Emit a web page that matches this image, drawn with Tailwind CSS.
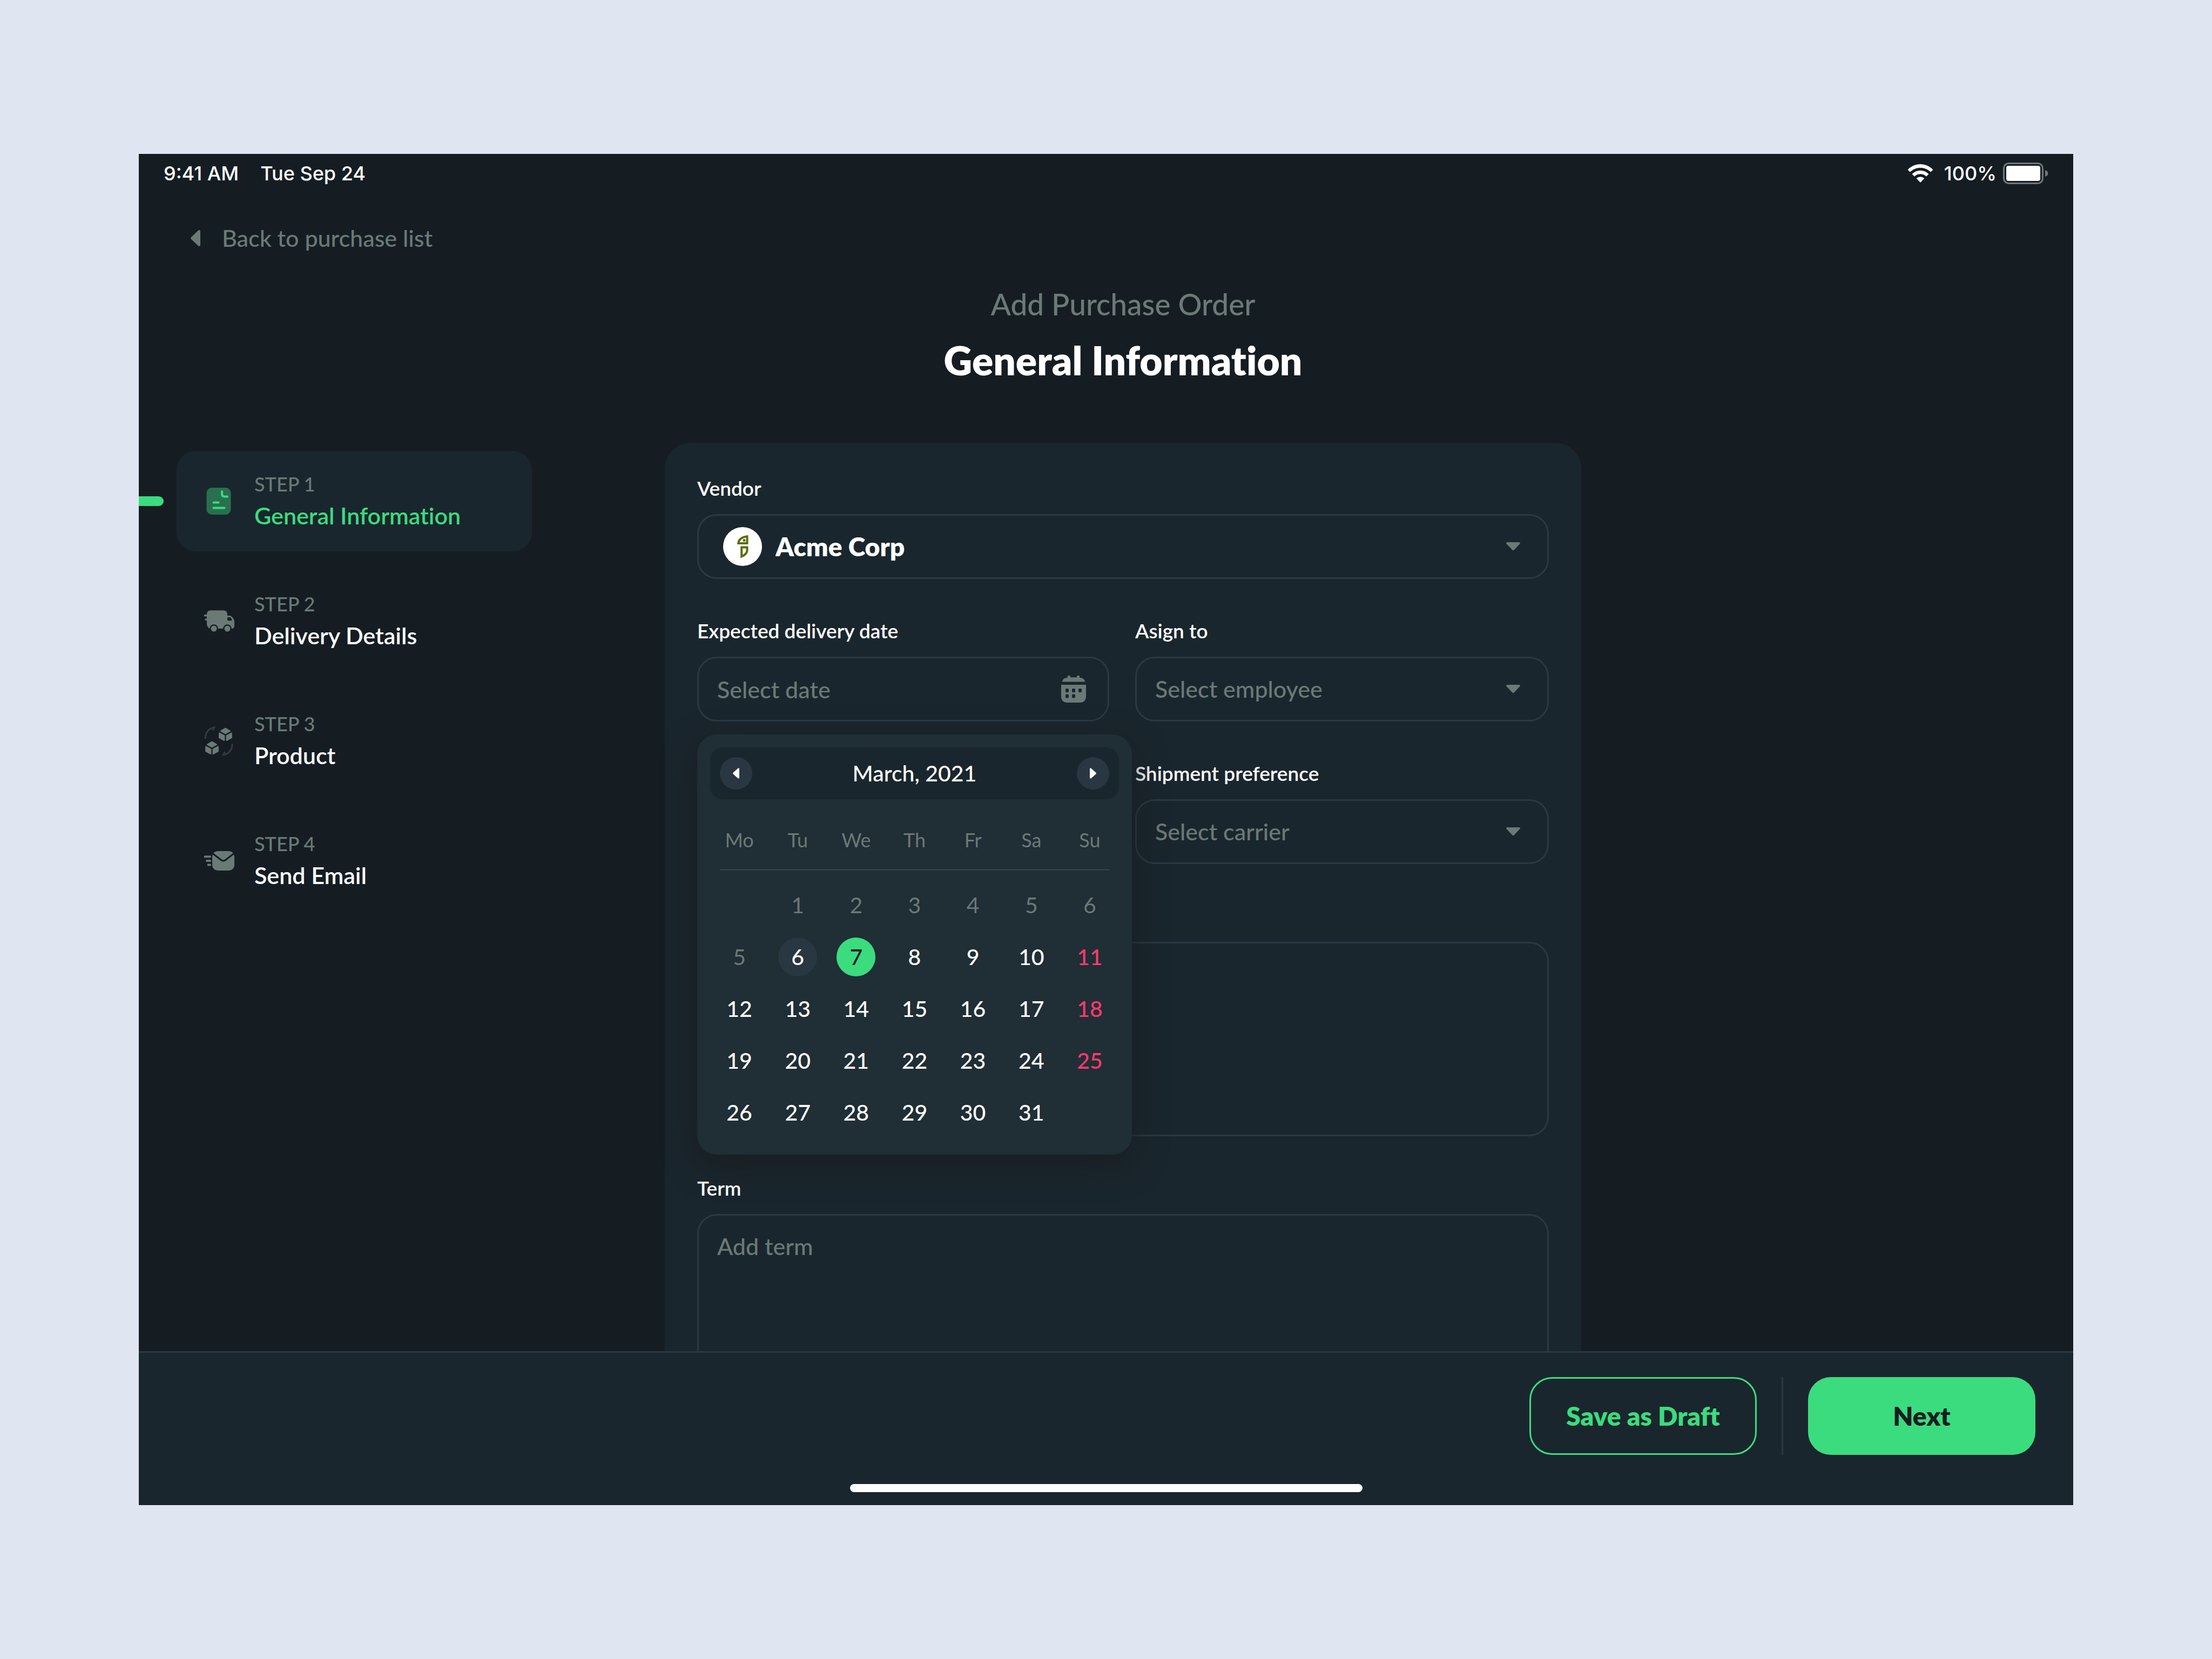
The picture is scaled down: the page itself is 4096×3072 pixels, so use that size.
<!DOCTYPE html>
<html lang="en">
<head>
  <meta charset="UTF-8" />
  <meta name="viewport" content="width=device-width, initial-scale=1" />
  <title>Add Purchase Order - General Information</title>
  <script src="https://cdn.jsdelivr.net/npm/@tailwindcss/browser@4"></script>
</head>
<body class="h-screen bg-[#dfe5f1] px-[257px] py-[285px] font-['Lato','Open_Sans',sans-serif] font-medium [font-variant-ligatures:no-common-ligatures] text-white">
  <div class="h-full bg-[#151d23] flex flex-col overflow-hidden">

    <!-- Status bar -->
    <div class="h-[72px] shrink-0 px-[46px] flex items-center justify-between font-['Inter',sans-serif] font-medium text-[36px]">
      <div class="flex gap-10">
        <span>9:41 AM</span>
        <span>Tue Sep 24</span>
      </div>
      <div class="flex items-center">
        <svg class="w-12 h-[34px] mr-5" viewBox="0 0 48 34" fill="currentColor">
          <path d="M.5 10.200C14-3.400 34-3.400 47.500 10.200L43.200 14.500C32.500 4 15.500 4 4.800 14.500Z" />
          <path d="M8.500 18.300C17.500 9.700 30.500 9.700 39.500 18.300L35 22.700C29 16.800 19 16.800 13 22.700Z" />
          <path d="M16.500 26.300C21 22.400 27 22.400 31.500 26.300L24 34Z" />
        </svg>
        <span class="mr-3">100%</span>
        <svg class="w-[84px] h-10" viewBox="0 0 84 40">
          <rect x="1.500" y="1.500" width="72" height="37" rx="9" fill="none" stroke="#727679" stroke-width="3" />
          <rect x="6" y="6" width="63" height="28" rx="4" fill="#fff" />
          <path d="M78 14c7 1 7 11 0 12z" fill="#727679" />
        </svg>
      </div>
    </div>

    <nav class="shrink-0 pt-[60px] pl-24">
      <a href="#" class="inline-flex items-center gap-10 text-[43px] leading-[48px] text-[#6b7977]">
        <svg class="w-[18px] h-[30px]" viewBox="0 0 18 30" fill="currentColor"><path d="M14 .8 1 13.200q-1.800 1.800 0 3.600L14 29.200q4 2.200 4-2V2.800q0-4.200-4-2z" /></svg>
        Back to purchase list
      </a>
    </nav>

    <main class="flex-1 min-h-0 overflow-hidden grid grid-cols-[974fr_1697fr_911fr] grid-rows-[auto_1fr] items-start pt-[62px]">
      <header class="col-start-2 text-center">
        <p class="text-[55px] leading-[72px] text-[#6b7977]">Add Purchase Order</p>
        <h1 class="mt-[26px] text-[73px] leading-[84px] font-extrabold">General Information</h1>
      </header>

      <!-- Steps -->
      <aside class="row-start-2 pt-[126px] pl-[70px] pr-[246px]">
        <ol class="flex flex-col gap-9">
          <li class="relative">
            <span class="absolute -left-[70px] top-[84px] w-[46px] h-[18px] rounded-r-full bg-[#3bdc7e]"></span>
            <a href="#" aria-current="step" class="h-[186px] px-12 flex items-center gap-9 rounded-[36px] bg-[#1a262d]">
              <svg class="w-[60px] h-[60px]" viewBox="0 0 60 60" fill="none" stroke="#3bdc7e" stroke-width="4" stroke-linecap="round">
                <rect x="7.500" y="5" width="45" height="50" rx="10" fill="#28704f" stroke="none" />
                <path d="M36 12v4.500q0 5 5 5h5M20.500 32.500h9M20.500 42.500h20" />
              </svg>
              <span class="flex flex-col pb-[2px]">
                <span class="text-[36px] leading-[48px] text-[#6b7977]">STEP 1</span>
                <span class="mt-2 text-[43px] leading-[54px] font-semibold text-[#3bdc7e]">General Information</span>
              </span>
            </a>
          </li>
          <li>
            <a href="#" class="h-[186px] px-12 flex items-center gap-9">
              <svg class="w-[60px] h-[60px]" viewBox="0 0 60 60" fill="#6b7977">
                <path d="M4.500 19.700H10M6 27.300H10" stroke="#6b7977" stroke-width="3.500" stroke-linecap="round" />
                <path d="M15 10.300H38.500Q46 10.300 46 18v2h5.500Q59 25 59 32v6.500q0 5-4 5.500H13Q8 41 8 35V17.500Q8 10.300 15 10.300Z" />
                <path d="M47.500 23h4q3 3 3.300 6.300h-7q-1.800 0-1.800-1.800v-3q0-1.500 1.500-1.500z" fill="#151d23" />
                <circle cx="21" cy="44" r="7.800" fill="#151d23" />
                <circle cx="46" cy="44" r="7.800" fill="#151d23" />
                <circle cx="21" cy="44" r="5.500" />
                <circle cx="46" cy="44" r="5.500" />
              </svg>
              <span class="flex flex-col pb-[2px]">
                <span class="text-[36px] leading-[48px] text-[#6b7977]">STEP 2</span>
                <span class="mt-2 text-[43px] leading-[54px] font-semibold">Delivery Details</span>
              </span>
            </a>
          </li>
          <li>
            <a href="#" class="h-[186px] px-12 flex items-center gap-9">
              <svg class="w-[60px] h-[60px]" viewBox="0 0 60 60" fill="#6b7977">
                <g stroke="#6b7977" stroke-linejoin="round" stroke-width="2">
                  <path d="M42.400 6.500 51 11.700 42.400 16.500 33.800 11.700ZM31 15.500 40.300 20.500V29L31 24ZM53.800 15.500 44.500 20.500V29L53.800 24Z" />
                  <path d="M17.500 31.500 26.100 36.700 17.500 41.500 8.900 36.700ZM6.100 40.500 15.400 45.500V54L6.100 49ZM28.900 40.500 19.600 45.500V54L28.900 49Z" />
                </g>
                <path d="M5.200 24.700Q6 8 22.500 4.500L19.500 9.500M55 36.700Q54 53 38 56L41 51" fill="none" stroke="#313b40" stroke-width="3" stroke-linecap="round" stroke-linejoin="round" />
              </svg>
              <span class="flex flex-col pb-[2px]">
                <span class="text-[36px] leading-[48px] text-[#6b7977]">STEP 3</span>
                <span class="mt-2 text-[43px] leading-[54px] font-semibold">Product</span>
              </span>
            </a>
          </li>
          <li>
            <a href="#" class="h-[186px] px-12 flex items-center gap-9">
              <svg class="w-[60px] h-[60px]" viewBox="0 0 60 60" fill="none">
                <rect x="18" y="12" width="41" height="36" rx="10" fill="#6b7977" />
                <path d="M17.500 15.500 34.500 28.500Q38.500 31.500 42.500 28.500L59.500 15.500" stroke="#151d23" stroke-width="3" />
                <path d="M4.500 22.300H14M8 30H14M10.500 37.500H14" stroke="#6b7977" stroke-width="4" stroke-linecap="round" />
              </svg>
              <span class="flex flex-col pb-[2px]">
                <span class="text-[36px] leading-[48px] text-[#6b7977]">STEP 4</span>
                <span class="mt-2 text-[43px] leading-[54px] font-semibold">Send Email</span>
              </span>
            </a>
          </li>
        </ol>
      </aside>

      <!-- Order form -->
      <form class="row-start-2 col-start-2 mt-[111px] px-[60px] pt-[60px] rounded-t-[48px] bg-[#1a262d] grid grid-cols-[254fr_255fr] gap-x-12 gap-y-[72px]">
        <div class="col-span-2 flex flex-col gap-6">
          <label for="vendor" class="text-[37px] leading-[48px] font-semibold">Vendor</label>
          <div class="relative">
            <select id="vendor" class="w-full h-[120px] pl-[142px] pr-24 appearance-none rounded-[36px] border-3 border-[#2a3944] text-[48px] font-extrabold">
              <option>Acme Corp</option>
            </select>
            <svg class="absolute left-12 top-6 w-[72px] h-[72px]" viewBox="0 0 72 72">
              <circle cx="36" cy="36" r="36" fill="#fff" />
              <g fill="none" stroke="#5d6b0c" stroke-width="4">
                <path d="M44.500 17.200V30H28.200Q29.500 19 44.500 17.200Z" />
                <path d="M34.200 37.500H44.500V43Q44 50.500 34.200 54.500Z" />
              </g>
              <circle cx="39" cy="24.500" r="2.500" fill="#5d6b0c" />
            </svg>
            <svg class="pointer-events-none absolute right-[53px] top-[52px] w-[26px] h-4" viewBox="0 0 26 16" fill="#6b7977"><path d="M2 0H24q3 .5 1.300 3L14.500 14.500q-1.500 1.500-3 0L.7 3Q-1 .5 2 0Z" /></svg>
          </div>
        </div>

        <div class="relative flex flex-col gap-6">
          <label for="delivery-date" class="text-[37px] leading-[48px] font-semibold">Expected delivery date</label>
          <div class="relative">
            <input id="delivery-date" type="text" placeholder="Select date" class="w-full h-[120px] pl-[34px] pr-24 rounded-[36px] border-3 border-[#2a3944] text-[43px] placeholder:text-[#6b7977]" />
            <svg class="pointer-events-none absolute right-[43px] top-[35px] w-[46px] h-[50px]" viewBox="0 0 46 50" fill="#6b7977">
              <path d="M12 3.500V2a2.500 2.500 0 0 1 5 0v1.200H29V2a2.500 2.500 0 0 1 5 0v1.500Q43 4.500 44.500 11.500H1.500Q3 4.500 12 3.500Z" />
              <path d="M0 17H46V38Q46 50 34 50H12Q0 50 0 38Z" />
              <g fill="#1a262d">
                <rect x="8" y="24" width="6" height="7" rx="2" /><rect x="20" y="24" width="6" height="7" rx="2" /><rect x="32" y="24" width="6" height="7" rx="2" />
                <rect x="8" y="34.500" width="6" height="7" rx="2" /><rect x="20" y="34.500" width="6" height="7" rx="2" />
              </g>
            </svg>
          </div>

          <!-- Date picker -->
          <div class="absolute left-0 top-full z-10 mt-6 w-[805px] px-6 pt-6 pb-[30px] rounded-[36px] bg-[#202e35] shadow-[0_18px_60px_rgba(24,28,30,0.8)]">
            <div class="h-24 px-[18px] flex items-center justify-between rounded-3xl bg-[#1a262d]">
              <button type="button" aria-label="Previous month" class="w-[60px] h-[60px] rounded-full bg-[#283742] flex items-center justify-center">
                <svg class="w-3 h-5" viewBox="0 0 12 20" fill="#fff"><path d="M9.500.8.800 8.500q-1.300 1.500 0 3L9.500 19.200Q12 20.500 12 18V2Q12-.5 9.500.8Z" /></svg>
              </button>
              <span class="text-[41px] font-medium">March, 2021</span>
              <button type="button" aria-label="Next month" class="w-[60px] h-[60px] rounded-full bg-[#283742] flex items-center justify-center">
                <svg class="w-3 h-5" viewBox="0 0 12 20" fill="#fff"><path d="M2.500.8 11.200 8.500q1.300 1.500 0 3L2.500 19.200Q0 20.500 0 18V2Q0-.5 2.500.8Z" /></svg>
              </button>
            </div>
            <table class="w-full table-fixed text-center text-[41px] font-medium">
              <thead class="text-[36px] text-[#6b7977]">
                <tr class="h-[129px]">
                  <th class="pt-5 font-normal">Mo</th>
                  <th class="pt-5 font-normal">Tu</th>
                  <th class="pt-5 font-normal">We</th>
                  <th class="pt-5 font-normal">Th</th>
                  <th class="pt-5 font-normal">Fr</th>
                  <th class="pt-5 font-normal">Sa</th>
                  <th class="pt-5 font-normal">Su</th>
                </tr>
                <tr><td colspan="7" class="px-[18px] pb-4"><hr class="border-t-3 border-[#2f404c]" /></td></tr>
              </thead>
              <tbody>
                <tr class="h-24 font-normal text-[#6b7977]"><td></td><td>1</td><td>2</td><td>3</td><td>4</td><td>5</td><td>6</td></tr>
                <tr class="h-24">
                  <td class="font-normal text-[#6b7977]">5</td>
                  <td><span class="mx-auto w-[72px] h-[72px] rounded-full bg-[#283742] flex items-center justify-center">6</span></td>
                  <td><span class="mx-auto w-[72px] h-[72px] rounded-full bg-[#3bdc7e] text-[#151d23] flex items-center justify-center">7</span></td>
                  <td>8</td><td>9</td><td>10</td><td class="text-[#ff3a70]">11</td>
                </tr>
                <tr class="h-24"><td>12</td><td>13</td><td>14</td><td>15</td><td>16</td><td>17</td><td class="text-[#ff3a70]">18</td></tr>
                <tr class="h-24"><td>19</td><td>20</td><td>21</td><td>22</td><td>23</td><td>24</td><td class="text-[#ff3a70]">25</td></tr>
                <tr class="h-24"><td>26</td><td>27</td><td>28</td><td>29</td><td>30</td><td>31</td><td></td></tr>
              </tbody>
            </table>
          </div>
        </div>

        <div class="flex flex-col gap-6">
          <label for="assignee" class="text-[37px] leading-[48px] font-semibold">Asign to</label>
          <div class="relative">
            <select id="assignee" class="w-full h-[120px] pl-[34px] pr-24 appearance-none rounded-[36px] border-3 border-[#2a3944] text-[43px] text-[#6b7977]">
              <option>Select employee</option>
            </select>
            <svg class="pointer-events-none absolute right-[53px] top-[52px] w-[26px] h-4" viewBox="0 0 26 16" fill="#6b7977"><path d="M2 0H24q3 .5 1.300 3L14.500 14.500q-1.500 1.500-3 0L.7 3Q-1 .5 2 0Z" /></svg>
          </div>
        </div>

        <div class="col-start-2 flex flex-col gap-6">
          <label for="carrier" class="text-[37px] leading-[48px] font-semibold">Shipment preference</label>
          <div class="relative">
            <select id="carrier" class="w-full h-[120px] pl-[34px] pr-24 appearance-none rounded-[36px] border-3 border-[#2a3944] text-[43px] text-[#6b7977]">
              <option>Select carrier</option>
            </select>
            <svg class="pointer-events-none absolute right-[53px] top-[52px] w-[26px] h-4" viewBox="0 0 26 16" fill="#6b7977"><path d="M2 0H24q3 .5 1.300 3L14.500 14.500q-1.500 1.500-3 0L.7 3Q-1 .5 2 0Z" /></svg>
          </div>
        </div>

        <div class="col-span-2 pt-[72px]">
          <textarea aria-label="Note" class="block w-full h-[360px] px-[34px] py-[30px] resize-none rounded-[36px] border-3 border-[#2a3944] text-[43px] leading-[54px]"></textarea>
        </div>

        <div class="col-span-2 flex flex-col gap-6">
          <label for="term" class="text-[37px] leading-[48px] font-semibold">Term</label>
          <textarea id="term" placeholder="Add term" class="w-full h-[360px] px-[34px] py-[30px] resize-none rounded-[36px] border-3 border-[#2a3944] text-[43px] leading-[54px] placeholder:text-[#6b7977]"></textarea>
        </div>
      </form>
    </main>

    <!-- Actions -->
    <footer class="shrink-0 pt-[45px] pb-6 border-t-3 border-[#2a3944] bg-[#1a262d]">
      <div class="pr-[70px] flex justify-end">
        <button type="button" class="w-[421px] h-36 rounded-[42px] border-3 border-[#3bdc7e] text-[48px] font-extrabold text-[#3bdc7e]">Save as Draft</button>
        <div class="mx-[46px] w-[3px] bg-[#2a3944]"></div>
        <button type="button" class="w-[421px] h-36 rounded-[42px] bg-[#3bdc7e] text-[48px] font-extrabold text-[#151d23]">Next</button>
      </div>
      <div class="mt-[54px] mx-auto w-[949px] h-[15px] rounded-full bg-white"></div>
    </footer>
  </div>
</body>
</html>
